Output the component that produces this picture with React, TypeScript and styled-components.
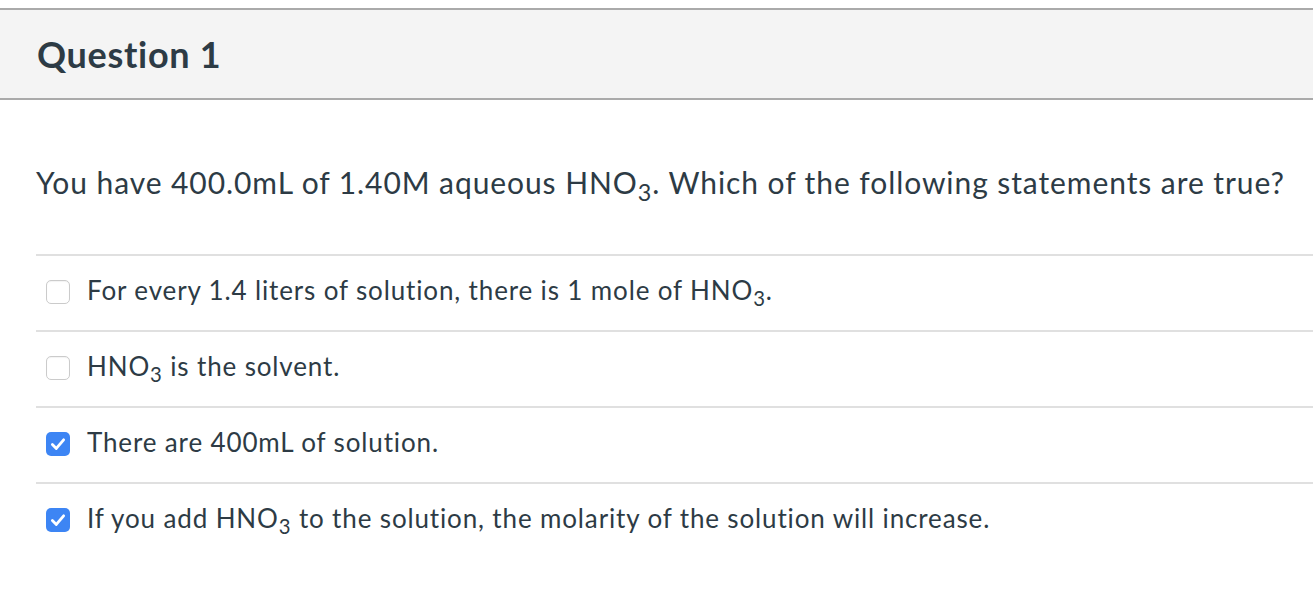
import React from "react";
import styled, { createGlobalStyle } from "styled-components";

const GlobalStyle = createGlobalStyle`
  html, body {
    margin: 0;
    padding: 0;
    background: #ffffff;
  }
  body {
    font-family: Lato, "Open Sans", "Liberation Sans", sans-serif;
    color: #2d3b45;
  }
`;

const Page = styled.div`
  padding-top: 8px;
  width: 1313px;
  overflow: hidden;
`;

const Header = styled.div`
  display: flex;
  align-items: center;
  height: 88px;
  padding-left: 37px;
  background: #f4f4f4;
  border-top: 2px solid #aaaaaa;
  border-bottom: 2px solid #aaaaaa;
`;

const Title = styled.h2`
  margin: 0;
  font-size: 36px;
  font-weight: 700;
  letter-spacing: 0.7px;
  line-height: 40px;
  color: #2d3b45;
`;

const Body = styled.div`
  padding-left: 36px;
`;

const QuestionText = styled.p`
  margin: 64px 0 54px;
  font-size: 30px;
  letter-spacing: 0.92px;
  line-height: 36px;
  white-space: nowrap;
`;

const Sub = styled.sub`
  font-size: 0.78em;
  line-height: 0;
  vertical-align: -0.28em;
`;

const AnswerList = styled.div`
  display: flex;
  flex-direction: column;
`;

const AnswerRow = styled.label`
  display: flex;
  align-items: flex-start;
  gap: 17px;
  height: 54px;
  padding: 20px 0 0 10px;
  border-top: 2px solid #e0e0e0;
`;

const Box = styled.span<{ $checked: boolean }>`
  flex: none;
  display: flex;
  align-items: center;
  justify-content: center;
  width: 24px;
  height: 24px;
  margin-top: 4px;
  box-sizing: border-box;
  border-radius: 5px;
  background: ${(p) => (p.$checked ? "#3d85f4" : "#ffffff")};
  border: ${(p) => (p.$checked ? "none" : "1px solid #cbcbcb")};
  box-shadow: ${(p) =>
    p.$checked ? "none" : "inset 0 1px 1px rgba(0, 0, 0, 0.05)"};
`;

const AnswerText = styled.span`
  font-size: 26px;
  letter-spacing: 0.86px;
  line-height: 28px;
  white-space: nowrap;
`;

const Check = () => (
  <svg width="18" height="18" viewBox="0 0 16 16">
    <path
      d="M3 8.4 L6.5 11.9 L13 4.3"
      fill="none"
      stroke="#ffffff"
      strokeWidth="2.5"
      strokeLinecap="round"
      strokeLinejoin="round"
    />
  </svg>
);

const HNO3 = () => (
  <>
    HNO<Sub>3</Sub>
  </>
);

const answers: { checked: boolean; text: React.ReactNode }[] = [
  {
    checked: false,
    text: (
      <>
        For every 1.4 liters of solution, there is 1 mole of <HNO3 />.
      </>
    ),
  },
  {
    checked: false,
    text: (
      <>
        <HNO3 /> is the solvent.
      </>
    ),
  },
  { checked: true, text: <>There are 400mL of solution.</> },
  {
    checked: true,
    text: (
      <>
        If you add <HNO3 /> to the solution, the molarity of the solution will
        increase.
      </>
    ),
  },
];

const App: React.FC = () => {
  return (
    <Page>
      <GlobalStyle />
      <Header>
        <Title>Question 1</Title>
      </Header>
      <Body>
        <QuestionText>
          You have 400.0mL of 1.40M aqueous <HNO3 />. Which of the following
          statements are true?
        </QuestionText>
        <AnswerList>
          {answers.map((a, i) => (
            <AnswerRow key={i}>
              <Box $checked={a.checked}>{a.checked && <Check />}</Box>
              <AnswerText>{a.text}</AnswerText>
            </AnswerRow>
          ))}
        </AnswerList>
      </Body>
    </Page>
  );
};

export default App;
